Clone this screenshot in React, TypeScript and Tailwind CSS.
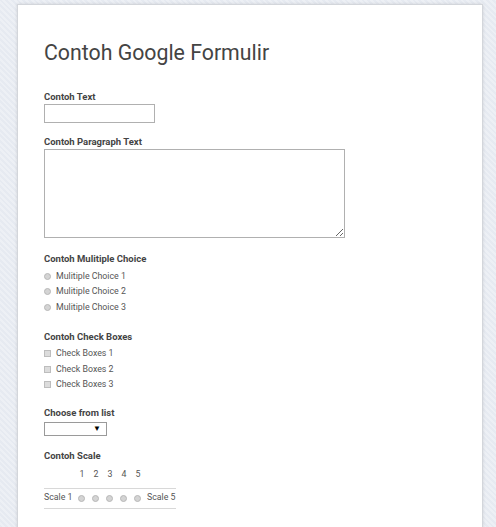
const font = { fontFamily: "Roboto, 'Liberation Sans', sans-serif" };

const Label = ({ children, className = "" }: { children: React.ReactNode; className?: string }) => (
  <div className={`text-[9.5px] leading-[14px] font-bold text-[#444] ${className}`}>{children}</div>
);

const Radio = () => (
  <span className="inline-block shrink-0 w-[7px] h-[7px] rounded-full bg-[#d4d4d4] border border-[#b8b8b8]" />
);

const Check = () => (
  <span className="inline-block shrink-0 w-[7px] h-[7px] bg-[#dcdcdc] border border-[#bdbdbd]" />
);

export default function App() {
  return (
    <div
      className="w-[496px] h-[527px] overflow-hidden pl-[17px] pt-[4px] bg-[#e9edf3] bg-[repeating-linear-gradient(45deg,#e6eaf1_0px,#e6eaf1_2px,#edf0f5_2px,#edf0f5_4px)]"
      style={font}
    >
      <div className="w-[466px] min-h-[540px] bg-white border border-[#d3d6db] shadow-[0_0_3px_rgba(0,0,0,0.12)] pl-[26px] pt-[34px]">
        {/* judul */}
        <h1 className="text-[21.3px] leading-[28px] text-[#444] font-normal">Contoh Google Formulir</h1>

        {/* text */}
        <Label className="mt-[23px]">Contoh Text</Label>
        <input className="block w-[111px] h-[19px] border border-[#b0b0b0] outline-none" />

        {/* paragraph */}
        <Label className="mt-[12px]">Contoh Paragraph Text</Label>
        <textarea className="block w-[301px] h-[89px] border border-[#b0b0b0] outline-none" />

        {/* multiple choice */}
        <Label className="mt-[14px] mb-[2.5px]">Contoh Mulitiple Choice</Label>
        {["Mulitiple Choice 1", "Mulitiple Choice 2", "Mulitiple Choice 3"].map(t => (
          <div key={t} className="flex items-center h-[15.5px] gap-[5px] text-[8.8px] text-[#555]">
            <Radio />
            <span>{t}</span>
          </div>
        ))}

        {/* check boxes */}
        <Label className="mt-[14.5px] mb-[2.5px]">Contoh Check Boxes</Label>
        {["Check Boxes 1", "Check Boxes 2", "Check Boxes 3"].map(t => (
          <div key={t} className="flex items-center h-[15.5px] gap-[5px] text-[8.8px] text-[#555]">
            <Check />
            <span>{t}</span>
          </div>
        ))}

        {/* list */}
        <Label className="mt-[13px]">Choose from list</Label>
        <div className="mt-[2px] w-[63px] h-[14px] border border-[#9a9a9a] flex items-center justify-end pr-[5px]">
          <span className="text-[8px] leading-none text-black">▼</span>
        </div>

        {/* scale */}
        <Label className="mt-[13px]">Contoh Scale</Label>
        <div className="mt-[5px] flex h-[14px] items-center text-[8.8px] text-[#555]">
          <div className="w-[31px] shrink-0" />
          {[1, 2, 3, 4, 5].map(n => (
            <div key={n} className="w-[14px] shrink-0 text-center">{n}</div>
          ))}
        </div>
        <div className="mt-[6px] w-[132px] h-[21px] border-y border-[#d8d8d8] flex items-center text-[8.8px] text-[#555] whitespace-nowrap">
          <div className="w-[30px] shrink-0">Scale 1</div>
          {[1, 2, 3, 4, 5].map(n => (
            <div key={n} className="w-[14px] shrink-0 flex justify-center">
              <Radio />
            </div>
          ))}
          <div className="pl-[3px]">Scale 5</div>
        </div>
      </div>
    </div>
  );
}
